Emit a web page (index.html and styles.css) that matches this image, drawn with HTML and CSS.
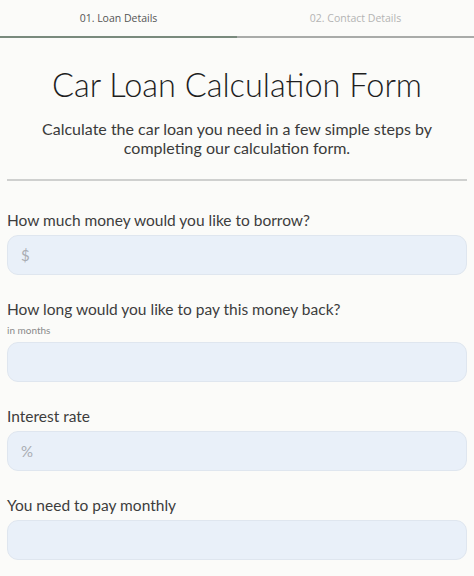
FILE: index.html
```html
<!DOCTYPE html>
<html lang="en">
<head>
    <meta charset="UTF-8">
    <meta name="viewport" content="width=device-width, initial-scale=1.0">
    <title>Car Loan Calculation Form</title>
    <link rel="stylesheet" href="styles.css">
</head>
<body>
    <nav class="steps">
        <div class="step active">01. Loan Details</div>
        <div class="step">02. Contact Details</div>
    </nav>

    <main class="form">
        <header class="form-header">
            <h1>Car Loan Calculation Form</h1>
            <p class="intro">Calculate the car loan you need in a few simple steps by completing our calculation form.</p>
        </header>

        <div class="field">
            <label for="amount">How much money would you like to borrow?</label>
            <input type="text" id="amount" placeholder="$">
        </div>

        <div class="field">
            <label for="term">How long would you like to pay this money back?</label>
            <span class="hint">in months</span>
            <input type="text" id="term">
        </div>

        <div class="field">
            <label for="rate">Interest rate</label>
            <input type="text" id="rate" placeholder="%">
        </div>

        <div class="field">
            <label for="monthly">You need to pay monthly</label>
            <input type="text" id="monthly" readonly>
        </div>
    </main>
</body>
</html>
```

FILE: styles.css
```css
:root {
    --bg: #fbfbf9;
    --text: #3d3d3d;
    --input-bg: #e9f0f9;
    --input-border: #dfe6ef;
    --radius: 11px;
}

* {
    box-sizing: border-box;
    margin: 0;
    padding: 0;
}

body {
    background-color: var(--bg);
    color: var(--text);
    font-family: Lato, 'Noto Sans', sans-serif;
}

/* step tabs */
.steps {
    display: grid;
    grid-template-columns: 1fr 1fr;
    height: 38px;
}

.step {
    display: flex;
    align-items: center;
    justify-content: center;
    font-family: 'Open Sans', sans-serif;
    font-size: 10.5px;
    color: #b4b4b4;
    border-bottom: 2px solid #a9aba9;
}

.step.active {
    color: #555;
    border-bottom-color: #798a7d;
}

/* form */
.form {
    padding: 0 7px;
}

.form-header {
    text-align: center;
    padding-top: 28px;
    padding-bottom: 22px;
    border-bottom: 2px solid #cfd0cf;
    margin-bottom: 29px;
}

h1 {
    font-size: 32.5px;
    font-weight: 300;
    line-height: 38px;
    color: #1e1e1e;
    margin-bottom: 16px;
}

.intro {
    font-size: 16px;
    line-height: 18.5px;
    color: #3a3a3a;
    padding: 0 30px;
}

.field {
    margin-bottom: 24px;
}

.field label {
    display: block;
    font-size: 15.5px;
    line-height: 20px;
    color: var(--text);
    margin-bottom: 5px;
}

.hint {
    display: block;
    font-size: 10px;
    line-height: 14px;
    color: #8a8a8a;
    margin-top: -1px;
    margin-bottom: 5px;
}

.field input {
    display: block;
    width: 100%;
    height: 40px;
    padding: 0 13px;
    border: 1px solid var(--input-border);
    border-radius: var(--radius);
    background-color: var(--input-bg);
    font-family: Lato, sans-serif;
    font-size: 15px;
    color: var(--text);
    outline: none;
}

.field input::placeholder {
    color: #a9adb3;
}
```
